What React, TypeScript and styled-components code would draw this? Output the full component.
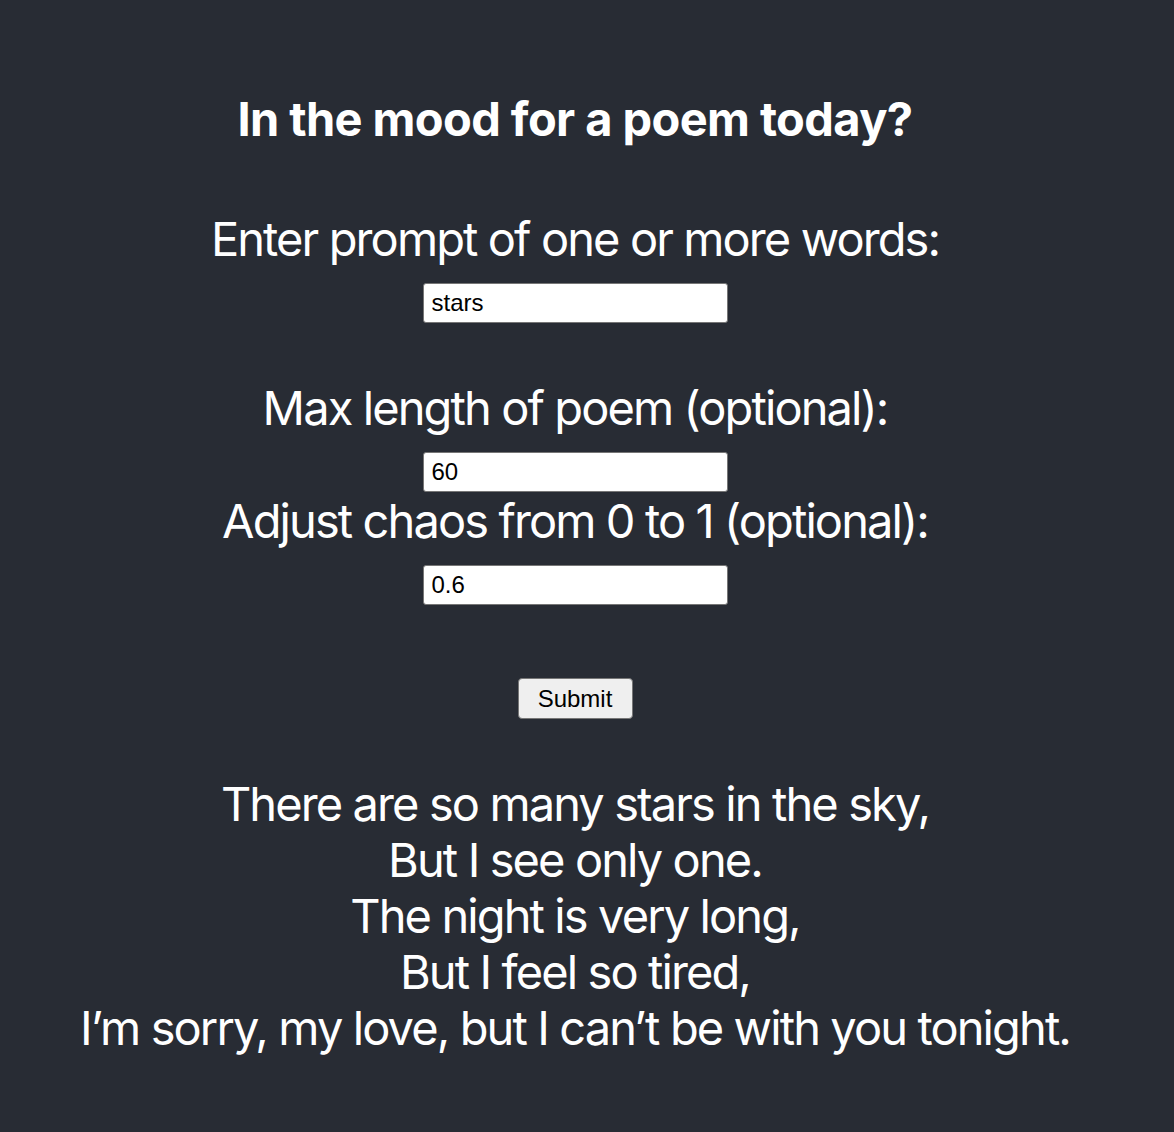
import styled, { createGlobalStyle } from 'styled-components';

const GlobalStyle = createGlobalStyle`
  body {
    margin: 0;
    background: #282c34;
  }
`;

const Page = styled.div`
  min-height: 100vh;
  background: #282c34;
  color: #ffffff;
  font-family: Inter, 'Noto Sans', sans-serif;
  font-size: 47px;
  line-height: 56px;
  letter-spacing: -1.9px;
  display: flex;
  flex-direction: column;
  align-items: center;
  text-align: center;
  padding: 91px 24px 0 0;
  box-sizing: border-box;
`;

const Title = styled.h1`
  margin: 0;
  font-size: 47px;
  line-height: 56px;
  font-weight: 700;
  letter-spacing: -0.6px;
`;

const Form = styled.form`
  display: flex;
  flex-direction: column;
  align-items: center;
`;

const Label = styled.label<{ $top: number }>`
  display: block;
  margin-top: ${(p) => p.$top}px;
  font-weight: 400;
`;

const Input = styled.input`
  box-sizing: border-box;
  width: 305px;
  height: 40px;
  margin-top: 16px;
  padding: 0 8px;
  border: 1.5px solid #767676;
  border-radius: 3px;
  background: #ffffff;
  color: #000000;
  font-family: 'Liberation Sans', Arial, sans-serif;
  font-size: 24px;
  letter-spacing: 0;
`;

const SubmitButton = styled.button`
  box-sizing: border-box;
  margin-top: 73px;
  width: 115px;
  height: 41px;
  border: 1.5px solid #767676;
  border-radius: 4px;
  background: #efefef;
  color: #000000;
  font-family: 'Liberation Sans', Arial, sans-serif;
  font-size: 24px;
  letter-spacing: 0;
  padding: 0;
`;

const Poem = styled.div`
  margin-top: 57px;
  font-size: 47px;
  line-height: 56px;
`;

const poemLines = [
  'There are so many stars in the sky,',
  'But I see only one.',
  'The night is very long,',
  'But I feel so tired,',
  'I’m sorry, my love, but I can’t be with you tonight.',
];

export default function App() {
  return (
    <>
      <GlobalStyle />
      <Page>
        <Title>In the mood for a poem today?</Title>
        <Form onSubmit={(e) => e.preventDefault()}>
          <Label $top={64}>Enter prompt of one or more words:</Label>
          <Input type="text" defaultValue="stars" />
          <Label $top={57}>Max length of poem (optional):</Label>
          <Input type="text" defaultValue="60" />
          <Label $top={1}>Adjust chaos from 0 to 1 (optional):</Label>
          <Input type="text" defaultValue="0.6" />
          <SubmitButton type="submit">Submit</SubmitButton>
        </Form>
        <Poem>
          {poemLines.map((line) => (
            <div key={line}>{line}</div>
          ))}
        </Poem>
      </Page>
    </>
  );
}
